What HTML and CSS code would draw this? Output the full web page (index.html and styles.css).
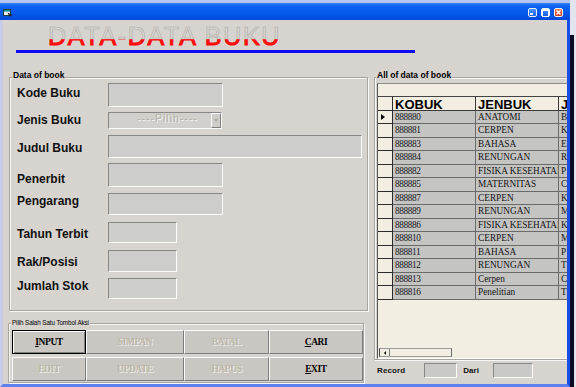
FILE: index.html
```html
<!DOCTYPE html>
<html lang="id">
<head>
<meta charset="utf-8">
<title>Data-Data Buku</title>
<link rel="stylesheet" href="styles.css">
</head>
<body>
<div class="screen">
  <div class="win">
    <div class="win-top"></div>
    <div class="titlebar">
      <svg class="app-icon" width="10" height="9" viewBox="0 0 10 9" aria-hidden="true">
        <rect x="0.5" y="1.5" width="7" height="6" fill="#e6eeee" stroke="#1e3c44" stroke-width="1"/>
        <rect x="1" y="2" width="6" height="1.6" fill="#138a8a"/>
        <path d="M4.5 4.5 L9.6 7 L6.5 8.8 Z" fill="#2a2a2a"/>
      </svg>
      <div class="tb-buttons">
        <span class="tb-btn tb-min"></span>
        <span class="tb-btn tb-max"></span>
        <span class="tb-btn tb-close">
          <svg width="7" height="7" viewBox="0 0 7 7" aria-hidden="true"><path d="M1.5 1.5 L5.5 5.5 M5.5 1.5 L1.5 5.5" stroke="#fff" stroke-width="1.4"/></svg>
        </span>
      </div>
    </div>
    <div class="client">
      <div class="header">
        <div class="title" data-text="DATA-DATA BUKU">DATA-DATA BUKU</div>
        <div class="rule"></div>
      </div>
      <div class="main">
        <div class="left">
          <div class="frame frame-data">
            <span class="legend legend-bold">Data of book</span>
            <div class="form">
              <div class="labels">
                <div class="lbl">Kode Buku</div>
                <div class="lbl">Jenis Buku</div>
                <div class="lbl">Judul Buku</div>
                <div class="lbl">Penerbit</div>
                <div class="lbl">Pengarang</div>
                <div class="lbl">Tahun Terbit</div>
                <div class="lbl">Rak/Posisi</div>
                <div class="lbl">Jumlah Stok</div>
              </div>
              <div class="inputs">
                <div class="tb f-kode"></div>
                <div class="tb select f-jenis">
                  <span class="select-text">----Pilih----</span>
                  <span class="select-btn"></span>
                </div>
                <div class="tb f-judul"></div>
                <div class="tb f-penerbit"></div>
                <div class="tb f-pengarang"></div>
                <div class="tb f-tahun"></div>
                <div class="tb f-rak"></div>
                <div class="tb f-stok"></div>
              </div>
            </div>
          </div>
          <div class="frame frame-actions">
            <span class="legend legend-small">Pilih Salah Satu Tombol Aksi</span>
            <div class="btn-grid">
              <button class="btn btn-default"><u>I</u>NPUT</button>
              <button class="btn" disabled>SIMPAN</button>
              <button class="btn" disabled>BATAL</button>
              <button class="btn"><u>C</u>ARI</button>
              <button class="btn" disabled>EDIT</button>
              <button class="btn" disabled>UPDATE</button>
              <button class="btn" disabled>HAPUS</button>
              <button class="btn"><u>E</u>XIT</button>
            </div>
          </div>
        </div>
        <div class="right">
          <div class="frame frame-list">
            <span class="legend legend-bold">All of data of book</span>
            <div class="grid">
              <div class="grid-caption"></div>
              <div class="dg">
                <div class="sel hd-sel"></div><div class="hd">KOBUK</div><div class="hd">JENBUK</div><div class="hd">JUDUL</div>
                <div class="sel cur"><span class="ptr"></span></div><div class="cell num">888880</div><div class="cell">ANATOMI</div><div class="cell">B</div>
                <div class="sel"></div><div class="cell num">888881</div><div class="cell">CERPEN</div><div class="cell">K</div>
                <div class="sel"></div><div class="cell num">888883</div><div class="cell">BAHASA</div><div class="cell">E</div>
                <div class="sel"></div><div class="cell num">888884</div><div class="cell">RENUNGAN</div><div class="cell">R</div>
                <div class="sel"></div><div class="cell num">888882</div><div class="cell">FISIKA KESEHATAN</div><div class="cell">P</div>
                <div class="sel"></div><div class="cell num">888885</div><div class="cell">MATERNITAS</div><div class="cell">C</div>
                <div class="sel"></div><div class="cell num">888887</div><div class="cell">CERPEN</div><div class="cell">K</div>
                <div class="sel"></div><div class="cell num">888889</div><div class="cell">RENUNGAN</div><div class="cell">M</div>
                <div class="sel"></div><div class="cell num">888886</div><div class="cell">FISIKA KESEHATAN</div><div class="cell">K</div>
                <div class="sel"></div><div class="cell num">888810</div><div class="cell">CERPEN</div><div class="cell">M</div>
                <div class="sel"></div><div class="cell num">888811</div><div class="cell">BAHASA</div><div class="cell">P</div>
                <div class="sel"></div><div class="cell num">888812</div><div class="cell">RENUNGAN</div><div class="cell">T</div>
                <div class="sel"></div><div class="cell num">888813</div><div class="cell">Cerpen</div><div class="cell">C</div>
                <div class="sel"></div><div class="cell num">888816</div><div class="cell">Penelitian</div><div class="cell">T</div>
              </div>
              <div class="grid-fill"></div>
              <div class="hscroll">
                <span class="hs-arrow"><span class="hs-tri"></span></span>
                <span class="hs-track"></span>
              </div>
              <div class="grid-pad"></div>
            </div>
          </div>
          <div class="record">
            <span class="rec-lbl">Record</span>
            <span class="rec-box rec-box1"></span>
            <span class="rec-lbl rec-dari">Dari</span>
            <span class="rec-box rec-box2"></span>
          </div>
        </div>
      </div>
    </div>
  </div>
  <div class="edge">
    <div class="edge-top"></div>
    <div class="edge-black"></div>
  </div>
</div>
</body>
</html>
```
FILE: styles.css
```css
* { box-sizing: border-box; }
html, body { margin: 0; padding: 0; }
body {
  width: 576px;
  height: 387px;
  overflow: hidden;
  background: #e2e5ef;
  font-family: "Liberation Sans", Arial, sans-serif;
}
.screen { display: flex; width: 576px; height: 387px; }
.win {
  width: 570px;
  height: 387px;
  flex: none;
  display: flex;
  flex-direction: column;
}
.win-top { height: 3px; flex: none; background: #b2c5f3; }

/* ---------- title bar ---------- */
.titlebar {
  height: 17px;
  flex: none;
  display: flex;
  align-items: flex-start;
  padding: 0 7px 0 3px;
  background: linear-gradient(to bottom, #3a86f8 0, #0d62f2 3px, #0457ea 11px, #0049d9 17px);
}
.app-icon { display: block; margin-top: 5px; }
.tb-buttons { margin-left: auto; margin-top: 5px; display: flex; gap: 4px; }
.tb-btn {
  width: 9px;
  height: 9px;
  border: 1px solid #eef3ff;
  border-radius: 2px;
  background: linear-gradient(to bottom, #4a92ff, #1a5cf0);
  display: flex;
}
.tb-min { align-items: flex-end; padding: 0 0 1px 1px; }
.tb-min::before { content: ""; width: 3px; height: 2px; background: #fff; }
.tb-max { align-items: center; justify-content: center; }
.tb-max::before { content: ""; width: 5px; height: 5px; border: 1px solid #fff; border-top-width: 2px; }
.tb-close {
  background: linear-gradient(to bottom, #f08a6a, #e0502a 50%, #c83a18);
  align-items: center;
  justify-content: center;
}
.tb-close svg { display: block; }

/* ---------- client ---------- */
.client {
  flex: 1;
  min-height: 0;
  display: flex;
  flex-direction: column;
  background: #d7d4cf;
  border-left: 3px solid #c5cde8;
  border-right: 3px solid #1a4be3;
  border-bottom: 3px solid #5c82ee;
}
.header { flex: none; }
.title {
  position: relative;
  width: max-content;
  margin: 4px 0 0 45px;
  font: 25px/25px "Liberation Sans", Arial, sans-serif;
  letter-spacing: 1.7px;
  color: transparent;
  -webkit-text-stroke: 0.6px #b0aca8;
}
.title::after {
  content: attr(data-text);
  position: absolute;
  left: 0;
  top: 0;
  color: #ff0c0c;
  -webkit-text-stroke: 1px #ff0c0c;
  clip-path: inset(61% 0 0 0);
}
.rule { margin: 1px 0 0 13px; width: 399px; height: 3px; background: #0c0cf2; }

.main { flex: 1; min-height: 0; display: flex; }
.left { width: 365px; flex: none; display: flex; flex-direction: column; }

/* ---------- frames ---------- */
.frame {
  position: relative;
  border: 1px solid #a9a59d;
  box-shadow: 1px 1px 0 #f6f6f6, inset 1px 1px 0 #f6f6f6;
  flex: none;
}
.legend {
  position: absolute;
  background: #d7d4cf;
  padding: 0 1px;
  white-space: nowrap;
  color: #000;
}
.legend-bold { top: -7px; font: bold 8.5px/9px "Liberation Sans", Arial, sans-serif; }
.legend-small { top: -5px; left: 2px; font: 6.3px/8px "Liberation Sans", Arial, sans-serif; letter-spacing: -0.1px; }
.frame-data .legend { left: 2px; }
.frame-list .legend { left: 1px; }

.frame-data { margin: 24px 0 0 6px; width: 359px; height: 234px; }
.form { display: flex; padding-left: 7px; }
.labels { width: 91px; flex: none; display: flex; flex-direction: column; }
.lbl { font: bold 12px/14px "Liberation Sans", Arial, sans-serif; color: #111; white-space: nowrap; }
.lbl:nth-child(1) { margin-top: 7.5px; }
.lbl:nth-child(2) { margin-top: 13.6px; }
.lbl:nth-child(3) { margin-top: 14px; }
.lbl:nth-child(4) { margin-top: 17px; }
.lbl:nth-child(5) { margin-top: 7.7px; }
.lbl:nth-child(6) { margin-top: 19.3px; }
.lbl:nth-child(7) { margin-top: 13.7px; }
.lbl:nth-child(8) { margin-top: 10px; }

.inputs { display: flex; flex-direction: column; align-items: flex-start; }
.tb {
  border: 1px solid;
  border-color: #878787 #fbfbfb #fbfbfb #878787;
  background: #cdcdcc;
}
.f-kode { margin-top: 5px; width: 115px; height: 24px; }
.f-jenis { margin-top: 5px; width: 114px; height: 17px; }
.f-judul { margin-top: 6px; width: 254px; height: 23px; }
.f-penerbit { margin-top: 5px; width: 115px; height: 24px; }
.f-pengarang { margin-top: 6px; width: 115px; height: 22px; }
.f-tahun { margin-top: 7px; width: 69px; height: 21px; }
.f-rak { margin-top: 7px; width: 69px; height: 22px; }
.f-stok { margin-top: 6px; width: 69px; height: 21px; }

.select { display: flex; background: #d2d0cc; }
.select-text {
  flex: 1;
  padding: 0 0 0 28px;
  font: 10.5px/11px "Liberation Sans", Arial, sans-serif;
  letter-spacing: 1px;
  color: #b4b0a9;
  text-shadow: 1px 1px 0 #f0f0f0;
  white-space: nowrap;
  overflow: hidden;
}
.select-btn {
  width: 10px;
  flex: none;
  border: 1px solid;
  border-color: #fbfbfb #808080 #808080 #fbfbfb;
  background: #d0cdc8;
  display: flex;
  align-items: center;
  justify-content: center;
}
.select-btn::before {
  content: "";
  border-top: 3px solid #a8a6a2;
  border-left: 2.5px solid transparent;
  border-right: 2.5px solid transparent;
}

/* ---------- action buttons ---------- */
.frame-actions { margin: 12px 0 0 5px; width: 356px; height: 60px; }
.btn-grid {
  display: grid;
  grid-template-columns: 74px 98px 85px 94px;
  grid-template-rows: 24px 24px;
  row-gap: 3px;
  padding: 6px 0 0 3px;
}
.btn {
  margin: 0;
  padding: 0;
  border: 1px solid;
  border-color: #fbfbfb #7c7c7c #7c7c7c #fbfbfb;
  background: #cac7c2;
  color: #000;
  font: bold 9.5px "Liberation Serif", "Times New Roman", serif;
  letter-spacing: -0.4px;
  display: flex;
  align-items: center;
  justify-content: center;
}
.btn:disabled { color: #bdb7a7; text-shadow: 1px 1px 0 #ececec; }
.btn-default {
  border: 1px solid #000;
  box-shadow: inset 1px 1px 0 #fff, inset -1px -1px 0 #808080;
}

/* ---------- data grid ---------- */
.right { flex: 1; min-width: 0; overflow: hidden; display: flex; flex-direction: column; }
.frame-list { margin: 24px 0 0 6px; width: 230px; height: 283px; }
.grid {
  margin: 5px 0 0 2px;
  width: 242px;
  height: 276px;
  display: flex;
  flex-direction: column;
  border-top: 1px solid #8c8c8c;
  border-left: 1px solid #555;
  border-bottom: 1px solid #fff;
  background: #f2eee2;
}
.grid-caption { flex: none; height: 13.4px; border-bottom: 1px solid #444; }
.dg {
  flex: none;
  display: grid;
  grid-template-columns: 15px 83px 83px 60px;
  grid-auto-rows: 13.5px;
}
.dg > div {
  border-right: 1px solid #6a6a6a;
  border-bottom: 1px solid #6a6a6a;
  overflow: hidden;
  white-space: nowrap;
}
.dg > .hd {
  display: flex;
  align-items: flex-end;
  padding-left: 2px;
  font: bold 13px/11px "Liberation Sans", Arial, sans-serif;
  color: #000;
  border-color: #3a3a3a;
}
.dg > .sel { background: #f2eee2; border-color: #2c2c2c; }
.cur { display: flex; align-items: center; padding-left: 3px; }
.ptr {
  width: 0;
  height: 0;
  border-left: 4px solid #000;
  border-top: 3.5px solid transparent;
  border-bottom: 3.5px solid transparent;
}
.cell {
  background: #c4c4c3;
  padding-left: 2px;
  font: 9.3px/12.5px "Liberation Serif", "Times New Roman", serif;
  color: #151515;
}
.num { letter-spacing: -0.4px; }
.grid-fill { flex: 1; }
.hscroll {
  flex: none;
  display: flex;
  width: 73px;
  height: 9px;
  margin-left: 1px;
  border: 1px solid #9a9a9a;
  border-left-color: #4a4a4a;
  border-right-color: #6a6a6a;
}
.hs-arrow {
  width: 10px;
  border-right: 1px solid #7a7a7a;
  display: flex;
  align-items: center;
  justify-content: center;
}
.hs-tri {
  width: 0;
  height: 0;
  border-right: 2px solid #000;
  border-top: 2px solid transparent;
  border-bottom: 2px solid transparent;
}
.hs-track { flex: 1; }
.grid-pad { flex: none; height: 1px; }

.record { display: flex; align-items: center; height: 15px; margin: 3px 0 0 9px; flex: none; }
.rec-lbl { font: bold 8px "Liberation Sans", Arial, sans-serif; color: #111; letter-spacing: 0.1px; }
.rec-box {
  height: 15px;
  border: 1px solid;
  border-color: #878787 #fbfbfb #fbfbfb #878787;
  background: #c9c9c8;
}
.rec-box1 { margin-left: 19px; width: 33px; }
.rec-dari { margin-left: 6px; }
.rec-box2 { margin-left: 14px; width: 40px; }

/* ---------- right window edge ---------- */
.edge { width: 6px; flex: none; display: flex; flex-direction: column; background: #e2e5ef; }
.edge-top { height: 35px; flex: none; }
.edge-black { flex: 1; width: 4px; background: #0b0b24; }
```
